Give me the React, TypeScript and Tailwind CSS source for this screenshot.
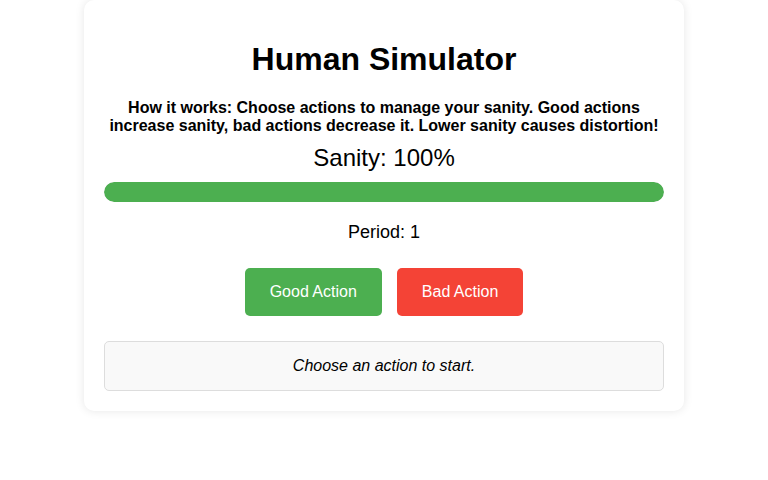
import { useState } from 'react'

export default function App() {
  const [sanity, setSanity] = useState(100)
  const [period, setPeriod] = useState(1)
  const [message, setMessage] = useState('Choose an action to start.')

  const act = (good: boolean) => {
    setSanity((s) => Math.max(0, Math.min(100, s + (good ? 10 : -10))))
    setPeriod((p) => p + 1)
    setMessage(good ? 'You did something good.' : 'You did something bad.')
  }

  return (
    <div className="min-h-[480px] bg-white font-['Liberation_Sans',Arial,sans-serif] text-black">
      <div className="mx-auto w-[600px] rounded-[10px] bg-white p-5 text-center shadow-[0_0_10px_rgba(0,0,0,0.1)]">
        <h1 className="my-[21px] text-[32px] font-bold leading-[37px]">Human Simulator</h1>
        <p className="mt-[21px] mb-2 text-base font-bold leading-[18.4px]">
          How it works: Choose actions to manage your sanity. Good actions increase sanity, bad actions decrease it. Lower sanity causes distortion!
        </p>
        <div className="text-2xl leading-[28px]">Sanity: {sanity}%</div>
        <div className="mt-[10px] h-5 w-full overflow-hidden rounded-full bg-[#ddd]">
          <div className="h-full rounded-full bg-[#4caf50]" style={{ width: `${sanity}%` }} />
        </div>
        <div className="mt-5 text-lg leading-[21px]">Period: {period}</div>
        <div className="mt-[25px] flex justify-center gap-[15px]">
          <button
            onClick={() => act(true)}
            className="rounded-[5px] bg-[#4caf50] px-[25px] py-[15px] text-base leading-[18px] text-white"
          >
            Good Action
          </button>
          <button
            onClick={() => act(false)}
            className="rounded-[5px] bg-[#f44336] px-[25px] py-[15px] text-base leading-[18px] text-white"
          >
            Bad Action
          </button>
        </div>
        <div className="mt-[25px] rounded-[5px] border border-[#ddd] bg-[#f9f9f9] p-[15px] text-base italic leading-[18px]">
          {message}
        </div>
      </div>
    </div>
  )
}
